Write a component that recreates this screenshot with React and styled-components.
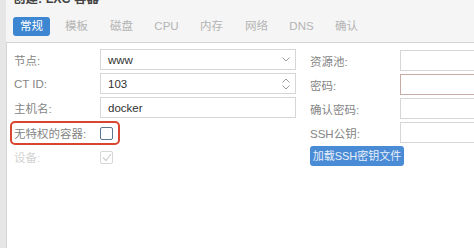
import React from "react";
import styled, { createGlobalStyle } from "styled-components";

const Global = createGlobalStyle`
  html, body { margin: 0; padding: 0; background: #ffffff; }
  body { font-family: "Liberation Sans", "Noto Sans CJK SC", sans-serif; }
  * { box-sizing: border-box; }
`;

const Window = styled.div`
  width: 474px;
  height: 248px;
  overflow: hidden;
  background: #ffffff;
  border-left: 6px solid #e6e6e6;
  box-shadow: inset 1px 0 0 #d6d6d6;
  position: relative;
  &::before {
    content: "";
    position: absolute;
    left: -6px;
    top: 0;
    bottom: 0;
    width: 2px;
    background: #c9c9c9;
  }
`;

const Header = styled.div`
  height: 43px;
  background: #f5f5f5;
  border-bottom: 1px solid #d4d4d4;
  padding-left: 7px;
  overflow: hidden;
`;

const Title = styled.div`
  margin-top: -8px;
  height: 14px;
  line-height: 14px;
  font-size: 12.5px;
  font-weight: bold;
  color: #444444;
`;

const TabBar = styled.div`
  display: flex;
  gap: 8px;
  margin-top: 11px;
`;

const Tab = styled.div`
  width: 37px;
  height: 19px;
  line-height: 19px;
  text-align: center;
  font-size: 11.5px;
  border-radius: 3px;
  color: ${(p) => (p.$active ? "#ffffff" : "#b4b4b4")};
  background: ${(p) => (p.$active ? "#3d86d1" : "transparent")};
`;

const Body = styled.div`
  display: flex;
  padding: 6px 0 0 8px;
`;

const Column = styled.div`
  display: flex;
  flex-direction: column;
  gap: 3px;
  width: ${(p) => p.$width}px;
  flex: none;
  padding-top: ${(p) => p.$top || 0}px;
`;

const Row = styled.div`
  display: flex;
  align-items: center;
  height: ${(p) => p.$h || 21}px;
`;

const Label = styled.div`
  width: ${(p) => p.$w}px;
  flex: none;
  font-size: 11.5px;
  color: ${(p) => (p.$disabled ? "#d2d2d2" : "#858585")};
`;

const InputBox = styled.div`
  position: relative;
  width: ${(p) => p.$w}px;
  height: 21px;
  border: 1px solid ${(p) => (p.$invalid ? "#c6aaa4" : "#d6d6d6")};
  background: #ffffff;
  display: flex;
  align-items: center;
  padding-left: 7px;
  font-size: 11.5px;
  color: #333333;
  flex: none;
`;

const Trigger = styled.div`
  position: absolute;
  right: 4px;
  top: 0;
  bottom: 0;
  width: 10px;
  display: flex;
  align-items: center;
  justify-content: center;
`;

const Highlight = styled.div`
  display: flex;
  align-items: center;
  height: 24px;
  width: 110px;
  margin-left: -4px;
  padding-left: 2px;
  border: 2px solid #d8462f;
  border-radius: 5px;
`;

const Check = styled.div`
  width: 13px;
  height: 13px;
  border: 1px solid ${(p) => (p.$disabled ? "#d6d6d6" : "#5c7690")};
  border-radius: 2px;
  background: #ffffff;
  display: flex;
  align-items: center;
  justify-content: center;
  flex: none;
`;

const Button = styled.div`
  width: 94px;
  height: 20px;
  line-height: 20px;
  text-align: center;
  font-size: 11px;
  color: #e8f0fa;
  background: #4a8bd6;
  border-radius: 3px;
`;

const tabs = ["常规", "模板", "磁盘", "CPU", "内存", "网络", "DNS", "确认"];

export default function App() {
  return (
    <>
      <Global />
      <Window>
        <Header>
          <Title>创建: LXC 容器</Title>
          <TabBar>
            {tabs.map((t, i) => (
              <Tab key={t} $active={i === 0}>
                {t}
              </Tab>
            ))}
          </TabBar>
        </Header>
        <Body>
          <Column $width={296}>
            <Row>
              <Label $w={86}>节点:</Label>
              <InputBox $w={196}>
                www
                <Trigger>
                  <svg width="8" height="5" viewBox="0 0 8 5">
                    <path d="M0.5 0.5 L4 4 L7.5 0.5" fill="none" stroke="#9a9a9a" strokeWidth="1" />
                  </svg>
                </Trigger>
              </InputBox>
            </Row>
            <Row>
              <Label $w={86}>CT ID:</Label>
              <InputBox $w={196}>
                103
                <Trigger>
                  <svg width="8" height="12" viewBox="0 0 8 12">
                    <path d="M0.5 4.5 L4 1 L7.5 4.5" fill="none" stroke="#9a9a9a" strokeWidth="1" />
                    <path d="M0.5 7.5 L4 11 L7.5 7.5" fill="none" stroke="#9a9a9a" strokeWidth="1" />
                  </svg>
                </Trigger>
              </InputBox>
            </Row>
            <Row>
              <Label $w={86}>主机名:</Label>
              <InputBox $w={196}>docker</InputBox>
            </Row>
            <Highlight>
              <Label $w={86}>无特权的容器:</Label>
              <Check />
            </Highlight>
            <Row $h={18}>
              <Label $w={86} $disabled>设备:</Label>
              <Check $disabled>
                <svg width="10" height="9" viewBox="0 0 10 9">
                  <path d="M1 4.5 L4 7.5 L9 1" fill="none" stroke="#d0d0d0" strokeWidth="1.2" />
                </svg>
              </Check>
            </Row>
          </Column>
          <Column $width={170} $top={1}>
            <Row>
              <Label $w={90}>资源池:</Label>
              <InputBox $w={100} />
            </Row>
            <Row>
              <Label $w={90}>密码:</Label>
              <InputBox $w={100} $invalid />
            </Row>
            <Row>
              <Label $w={90}>确认密码:</Label>
              <InputBox $w={100} />
            </Row>
            <Row>
              <Label $w={90}>SSH公钥:</Label>
              <InputBox $w={100} />
            </Row>
            <Row $h={20}>
              <Button>加载SSH密钥文件</Button>
            </Row>
          </Column>
        </Body>
      </Window>
    </>
  );
}
